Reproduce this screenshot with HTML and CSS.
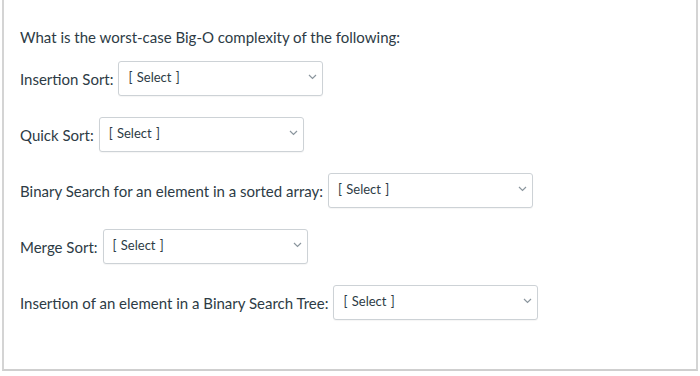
FILE: index.html
```html
<!DOCTYPE html>
<html lang="en">
<head>
    <meta charset="UTF-8">
    <title>Quiz Question</title>
    <link rel="stylesheet" href="styles.css">
</head>
<body>

<div class="question">
    <p class="question-text">What is the worst-case Big-O complexity of the following:</p>

    <div class="row">
        <span class="label">Insertion Sort:</span>
        <span class="select-wrap">
            <select class="answer"><option>[ Select ]</option></select>
            <svg class="chevron" width="9" height="6" viewBox="0 0 9 6"><path d="M1 1 L4.5 4.5 L8 1" fill="none" stroke="#8b969e" stroke-width="1.2"/></svg>
        </span>
    </div>

    <div class="row">
        <span class="label">Quick Sort:</span>
        <span class="select-wrap">
            <select class="answer"><option>[ Select ]</option></select>
            <svg class="chevron" width="9" height="6" viewBox="0 0 9 6"><path d="M1 1 L4.5 4.5 L8 1" fill="none" stroke="#8b969e" stroke-width="1.2"/></svg>
        </span>
    </div>

    <div class="row">
        <span class="label">Binary Search for an element in a sorted array:</span>
        <span class="select-wrap">
            <select class="answer"><option>[ Select ]</option></select>
            <svg class="chevron" width="9" height="6" viewBox="0 0 9 6"><path d="M1 1 L4.5 4.5 L8 1" fill="none" stroke="#8b969e" stroke-width="1.2"/></svg>
        </span>
    </div>

    <div class="row">
        <span class="label">Merge Sort:</span>
        <span class="select-wrap">
            <select class="answer"><option>[ Select ]</option></select>
            <svg class="chevron" width="9" height="6" viewBox="0 0 9 6"><path d="M1 1 L4.5 4.5 L8 1" fill="none" stroke="#8b969e" stroke-width="1.2"/></svg>
        </span>
    </div>

    <div class="row">
        <span class="label">Insertion of an element in a Binary Search Tree:</span>
        <span class="select-wrap">
            <select class="answer"><option>[ Select ]</option></select>
            <svg class="chevron" width="9" height="6" viewBox="0 0 9 6"><path d="M1 1 L4.5 4.5 L8 1" fill="none" stroke="#8b969e" stroke-width="1.2"/></svg>
        </span>
    </div>
</div>

</body>
</html>
```

FILE: styles.css
```css
body {
    margin: 0;
    background-color: #fff;
    font-family: Lato, "Open Sans", sans-serif;
    color: #2d3b45;
}

.question {
    margin-left: 2px;
    width: 676px;
    height: 343px;
    padding: 26px 0 0 16px;
    box-sizing: content-box;
    border-left: 2px solid #d4d4d4;
    border-right: 2px solid #d4d4d4;
    border-bottom: 2px solid #cfcfcf;
}

.question-text {
    margin: 0 0 13px 0;
    font-size: 15px;
    line-height: 22px;
}

.row {
    display: flex;
    align-items: center;
    height: 35px;
    margin-bottom: 21px;
    font-size: 15px;
}

.label {
    margin-right: 5px;
}

.select-wrap {
    position: relative;
    display: inline-block;
}

.answer {
    appearance: none;
    -webkit-appearance: none;
    width: 205px;
    height: 35px;
    padding: 0 24px 4px 9px;
    border: 1px solid #cdd2d6;
    border-radius: 3px;
    background-color: #fff;
    font-family: Lato, sans-serif;
    font-size: 13px;
    word-spacing: 1px;
    color: #2d3b45;
    box-shadow: 0 1px 1px rgba(0, 0, 0, 0.04);
}

.chevron {
    position: absolute;
    right: 6px;
    top: 13px;
    pointer-events: none;
}
```
